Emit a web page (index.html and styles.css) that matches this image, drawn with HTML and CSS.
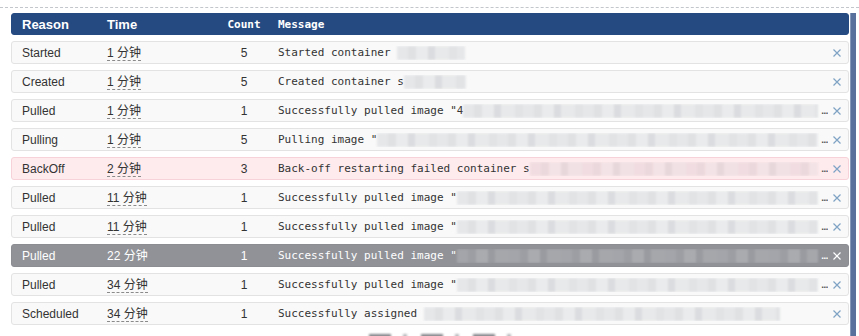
FILE: index.html
```html
<!DOCTYPE html>
<html lang="zh-CN">
<head>
<meta charset="utf-8">
<title>Events</title>
<link rel="stylesheet" href="styles.css">
</head>
<body>
<div class="page">
  <div class="wrap">
    <div class="table">
      <div class="row head">
        <div class="c-reason">Reason</div>
        <div class="c-time">Time</div>
        <div class="c-count">Count</div>
        <div class="c-msg">Message</div>
        <div class="c-x"></div>
      </div>

      <div class="row">
        <div class="c-reason">Started</div>
        <div class="c-time"><span class="ago">1 分钟</span></div>
        <div class="c-count">5</div>
        <div class="c-msg"><span class="txt">Started container </span><span class="blur w68"></span></div>
        <div class="c-x"><svg class="x" viewBox="0 0 8 8"><path d="M0.5 0.5L7.5 7.5M7.5 0.5L0.5 7.5"/></svg></div>
      </div>

      <div class="row">
        <div class="c-reason">Created</div>
        <div class="c-time"><span class="ago">1 分钟</span></div>
        <div class="c-count">5</div>
        <div class="c-msg"><span class="txt">Created container s</span><span class="blur w62"></span></div>
        <div class="c-x"><svg class="x" viewBox="0 0 8 8"><path d="M0.5 0.5L7.5 7.5M7.5 0.5L0.5 7.5"/></svg></div>
      </div>

      <div class="row">
        <div class="c-reason">Pulled</div>
        <div class="c-time"><span class="ago">1 分钟</span></div>
        <div class="c-count">1</div>
        <div class="c-msg"><span class="txt">Successfully pulled image "4</span><span class="blur grow"></span><span class="ell">…</span></div>
        <div class="c-x"><svg class="x" viewBox="0 0 8 8"><path d="M0.5 0.5L7.5 7.5M7.5 0.5L0.5 7.5"/></svg></div>
      </div>

      <div class="row">
        <div class="c-reason">Pulling</div>
        <div class="c-time"><span class="ago">1 分钟</span></div>
        <div class="c-count">5</div>
        <div class="c-msg"><span class="txt">Pulling image "</span><span class="blur grow"></span><span class="ell">…</span></div>
        <div class="c-x"><svg class="x" viewBox="0 0 8 8"><path d="M0.5 0.5L7.5 7.5M7.5 0.5L0.5 7.5"/></svg></div>
      </div>

      <div class="row warn">
        <div class="c-reason">BackOff</div>
        <div class="c-time"><span class="ago">2 分钟</span></div>
        <div class="c-count">3</div>
        <div class="c-msg"><span class="txt">Back-off restarting failed container s</span><span class="blur grow"></span><span class="ell">…</span></div>
        <div class="c-x"><svg class="x" viewBox="0 0 8 8"><path d="M0.5 0.5L7.5 7.5M7.5 0.5L0.5 7.5"/></svg></div>
      </div>

      <div class="row">
        <div class="c-reason">Pulled</div>
        <div class="c-time"><span class="ago">11 分钟</span></div>
        <div class="c-count">1</div>
        <div class="c-msg"><span class="txt">Successfully pulled image "</span><span class="blur grow"></span><span class="ell">…</span></div>
        <div class="c-x"><svg class="x" viewBox="0 0 8 8"><path d="M0.5 0.5L7.5 7.5M7.5 0.5L0.5 7.5"/></svg></div>
      </div>

      <div class="row">
        <div class="c-reason">Pulled</div>
        <div class="c-time"><span class="ago">11 分钟</span></div>
        <div class="c-count">1</div>
        <div class="c-msg"><span class="txt">Successfully pulled image "</span><span class="blur grow"></span><span class="ell">…</span></div>
        <div class="c-x"><svg class="x" viewBox="0 0 8 8"><path d="M0.5 0.5L7.5 7.5M7.5 0.5L0.5 7.5"/></svg></div>
      </div>

      <div class="row selected">
        <div class="c-reason">Pulled</div>
        <div class="c-time"><span class="ago">22 分钟</span></div>
        <div class="c-count">1</div>
        <div class="c-msg"><span class="txt">Successfully pulled image "</span><span class="blur grow"></span><span class="ell">…</span></div>
        <div class="c-x"><svg class="x" viewBox="0 0 8 8"><path d="M0.5 0.5L7.5 7.5M7.5 0.5L0.5 7.5"/></svg></div>
      </div>

      <div class="row">
        <div class="c-reason">Pulled</div>
        <div class="c-time"><span class="ago">34 分钟</span></div>
        <div class="c-count">1</div>
        <div class="c-msg"><span class="txt">Successfully pulled image "</span><span class="blur grow"></span><span class="ell">…</span></div>
        <div class="c-x"><svg class="x" viewBox="0 0 8 8"><path d="M0.5 0.5L7.5 7.5M7.5 0.5L0.5 7.5"/></svg></div>
      </div>

      <div class="row">
        <div class="c-reason">Scheduled</div>
        <div class="c-time"><span class="ago">34 分钟</span></div>
        <div class="c-count">1</div>
        <div class="c-msg"><span class="txt">Successfully assigned </span><span class="blur w356"></span></div>
        <div class="c-x"><svg class="x" viewBox="0 0 8 8"><path d="M0.5 0.5L7.5 7.5M7.5 0.5L0.5 7.5"/></svg></div>
      </div>

      <div class="foot"><span class="blur-dark"></span></div>
    </div>
    <div class="scrollbar"></div>
  </div>
</div>
</body>
</html>
```

FILE: styles.css
```css
html, body {
  margin: 0;
  padding: 0;
  background: #ffffff;
  height: 336px;
  overflow: hidden;
}

body {
  font-family: "Liberation Sans", Arial, "Noto Sans CJK SC", sans-serif;
  font-size: 12px;
  color: #333333;
}

.page {
  margin-top: 7px;
  border-top: 1px dashed #c3c7cc;
}

.wrap {
  display: flex;
  align-items: stretch;
  height: 328px;
}

.table {
  margin-left: 11px;
  width: 838px;
  padding-top: 5px;
  display: flex;
  flex-direction: column;
  gap: 6px;
}

.scrollbar {
  width: 6px;
  margin-left: 1px;
  margin-top: 5px;
  background: #57709c;
  border-left: 1px solid #8597b8;
  box-sizing: border-box;
}

.row {
  flex: none;
  display: grid;
  grid-template-columns: 85px 117px 40px 564px 21px;
  align-items: center;
  height: 23px;
  box-sizing: border-box;
  padding-left: 10px;
  background: #f9f9f9;
  border: 1px solid #e3e3e3;
  border-radius: 3px;
  color: #333333;
}

.row.head {
  height: 22px;
  background: #254a82;
  border-color: #254a82;
  color: #ffffff;
  font-weight: bold;
}

.head .c-reason,
.head .c-time {
  font-size: 13px;
  padding-top: 1px;
}

.head .c-count,
.head .c-msg {
  font-family: "DejaVu Sans Mono", "Liberation Mono", monospace;
  font-size: 11px;
}

.row.warn {
  background: #fdebee;
  border-color: #f7d3d9;
}

.row.selected {
  background: #909298;
  border-color: #8b8d93;
  color: #ffffff;
}

.c-reason {
  white-space: nowrap;
}

.c-time {
  white-space: nowrap;
}

.ago {
  display: inline-block;
  font-family: "Liberation Sans", Arial, "Noto Sans CJK SC", sans-serif;
  line-height: 13px;
  padding-top: 2px;
  border-bottom: 1px dashed #8a8a8a;
}

.selected .ago {
  border-bottom-color: transparent;
}

.c-count {
  text-align: center;
}

.c-msg {
  padding-left: 14px;
  display: flex;
  align-items: center;
  overflow: hidden;
  white-space: nowrap;
  font-family: "DejaVu Sans Mono", "Liberation Mono", monospace;
  font-size: 11px;
}

.head .c-msg {
  display: block;
}

.txt {
  white-space: pre;
}

.blur {
  display: inline-block;
  height: 14px;
  background:
    repeating-linear-gradient(90deg,
      #e6e7e9 0 11px,
      #dfe1e3 11px 19px,
      #eaebec 19px 31px,
      #dadcdf 31px 38px,
      #e8e9ea 38px 52px,
      #e1e3e5 52px 60px);
  filter: blur(1px);
}

.warn .blur {
  background:
    repeating-linear-gradient(90deg,
      #f1dde1 0 11px,
      #ebd8dc 11px 19px,
      #f4e3e6 19px 31px,
      #e7d6da 31px 38px,
      #f1e1e4 38px 52px);
}

.selected .blur {
  background:
    repeating-linear-gradient(90deg,
      #a3a5aa 0 11px,
      #9c9ea3 11px 19px,
      #a9abaf 19px 31px,
      #999ba0 31px 38px,
      #a5a7ab 38px 52px);
}

.blur.grow {
  flex: 1;
  min-width: 0;
}

.w68 { width: 68px; }
.w62 { width: 62px; }
.w356 { width: 356px; }

.ell {
  flex: none;
  width: 10px;
  text-align: right;
  color: #555555;
}

.selected .ell {
  color: #ffffff;
}

.c-x {
  display: flex;
  align-items: center;
  justify-content: flex-start;
  padding-left: 5px;
}

.x {
  width: 8px;
  height: 8px;
  fill: none;
  stroke: #7fa3c4;
  stroke-width: 1.2;
}

.selected .x {
  stroke: #ffffff;
}

.foot {
  flex: none;
  padding-left: 358px;
  height: 6px;
  overflow: hidden;
}

.blur-dark {
  display: inline-block;
  width: 150px;
  height: 10px;
  margin-top: 3px;
  background:
    repeating-linear-gradient(90deg,
      #55585d 0 22px,
      #ffffff 22px 34px,
      #9a9ca0 34px 38px,
      #ffffff 38px 52px);
  filter: blur(0.8px);
  opacity: 0.7;
}
```
